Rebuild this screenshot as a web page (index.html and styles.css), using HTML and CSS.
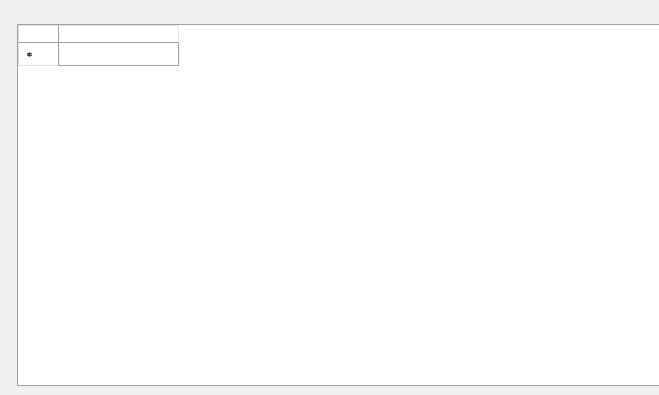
FILE: index.html
```html
<!DOCTYPE html>
<html lang="en">
<head>
    <meta charset="UTF-8">
    <title>Grid</title>
    <link rel="stylesheet" href="styles.css">
</head>
<body>
    <div class="grid-view">
        <div class="grid-row grid-header">
            <div class="row-head corner"></div>
            <div class="cell head-cell"></div>
        </div>
        <div class="grid-row new-row">
            <div class="row-head">
                <svg class="new-mark" width="5" height="5" viewBox="0 0 5 5">
                    <path d="M2.5 0.2V4.8M0.3 1.3L4.7 3.7M0.3 3.7L4.7 1.3" stroke="#444" stroke-width="1.3"/>
                </svg>
            </div>
            <div class="cell data-cell"></div>
        </div>
    </div>
</body>
</html>
```

FILE: styles.css
```css
body {
    margin: 0;
    background-color: #f0f0f0;
    font-family: "Liberation Sans", Arial, sans-serif;
    overflow: hidden;
}

.grid-view {
    margin-top: 24px;
    margin-left: 17px;
    width: 660px;
    height: 360px;
    background-color: #ffffff;
    border: 1px solid #a0a0a0;
    border-right: none;
}

.grid-row {
    display: flex;
}

.row-head {
    width: 39px;
    border-left: 1px solid #e3e3e3;
    border-right: 1px solid #a0a0a0;
    display: flex;
    align-items: center;
}

.cell {
    width: 119px;
}

.grid-header .row-head,
.grid-header .cell {
    height: 16px;
    border-top: 1px solid #e3e3e3;
    border-bottom: 1px solid #a0a0a0;
}

.head-cell {
    border-right: 1px solid #e3e3e3;
}

.new-row .row-head {
    height: 21px;
    padding-top: 1px;
    border-bottom: 1px solid #e3e3e3;
}

.new-mark {
    margin-left: 8px;
}

.data-cell {
    height: 22px;
    border-right: 1px solid #a0a0a0;
    border-bottom: 1px solid #a0a0a0;
}
```
